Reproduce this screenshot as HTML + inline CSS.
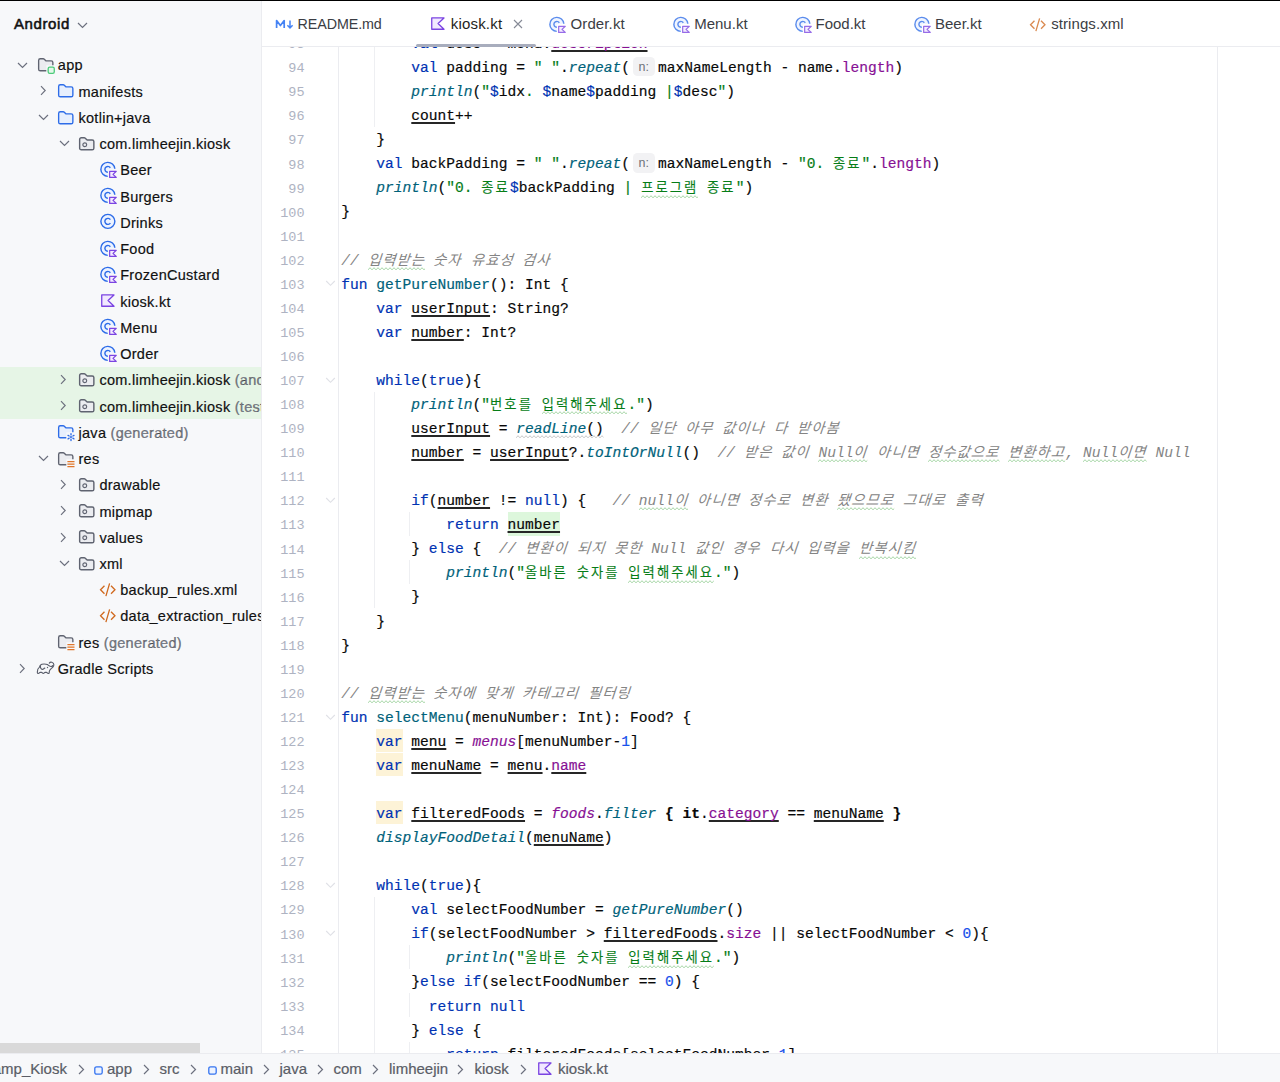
<!DOCTYPE html>
<html lang="ko">
<head>
<meta charset="utf-8">
<title>kiosk.kt</title>
<style>
*{box-sizing:border-box;margin:0;padding:0}
html,body{width:1280px;height:1082px;overflow:hidden;background:#fff}
body{position:relative;font-family:"Liberation Sans","Noto Sans CJK KR",sans-serif;color:#1e1f22}
#topline{position:absolute;left:0;top:0;width:1280px;height:1px;background:#000;z-index:20}
/* sidebar */
#side{position:absolute;left:0;top:0;width:262px;height:1053px;background:#f7f8fa;overflow:hidden;border-right:1px solid #ebecf0}
#side h1{position:absolute;left:14px;top:15px;font-size:15px;font-weight:normal;line-height:18px;color:#111;letter-spacing:0.6px;-webkit-text-stroke:0.55px #111}
.row{position:absolute;left:0;width:400px;height:26.2px;line-height:26.2px;font-size:14.5px;letter-spacing:0.28px;white-space:nowrap;color:#111}
.row .t{position:absolute;top:0;-webkit-text-stroke:0.18px #111}
.row svg{position:absolute}
.row .g{color:#7a7e89}
#hlbg{position:absolute;left:0;top:366.7px;width:262px;height:52.1px;background:#e6f5e6}
#hscroll{position:absolute;left:0;top:1043px;width:200px;height:10px;background:#d9d9d9}
/* tabs */
#tabs{position:absolute;left:262px;top:0;width:1018px;height:47px;background:#fff;border-bottom:1px solid #ebecf0}
.tab{position:absolute;top:15px;font-size:15px;line-height:18px;color:#3b3d44;white-space:nowrap}
.tab.act{color:#1e1f22}
#tabul{position:absolute;left:153.5px;top:43.5px;width:120px;height:3.5px;border-radius:2px;background:#a8adbd}
/* editor */
#ed{position:absolute;left:262px;top:47px;width:1018px;height:1006px;background:#fff;overflow:hidden}

#ln{position:absolute;left:0;top:-13.8px;width:42.5px;text-align:right;font-family:"Liberation Mono",monospace;font-size:13.5px;color:#aeb3c2}
#ln div{height:24.07px;line-height:24.07px}
#code{position:absolute;left:79.3px;top:-15px;font-family:"Liberation Mono","Noto Sans CJK KR",monospace;font-size:14.58px;color:#080808;-webkit-text-stroke:0.18px}
.cl{height:24.07px;line-height:24.07px;white-space:pre}
#gline{position:absolute;left:76px;top:0;width:1px;height:1006px;background:#ebecf0}
.ig{position:absolute;width:1px;background:#eeeff2}
#rline{position:absolute;left:955px;top:0;width:1px;height:1006px;background:#ebecf0}
.k{color:#0033b3}.s{color:#067d17}.c{color:#848484;font-style:italic;-webkit-text-stroke:0}
.c .h{font-size:14.3px;letter-spacing:1.14px;-webkit-text-stroke:0;display:inline-block;transform:skewX(-5deg)}
.f{color:#00627a;font-style:italic}.d{color:#00627a}.p{color:#871094}.n{color:#1750eb}
.i{font-style:italic}
.u{text-decoration:underline;text-decoration-thickness:1.8px;text-underline-offset:2px;text-decoration-color:#262626;text-decoration-skip-ink:none}
.w,.wg{position:relative}
.zz{position:absolute;left:0;top:14.3px;width:100%;height:4px;overflow:hidden}
.hint{display:inline-block;font-family:"Liberation Sans",sans-serif;font-size:12.5px;font-style:normal;-webkit-text-stroke:0;color:#6f7178;background:#f2f2f4;border-radius:4.5px;height:19.5px;line-height:21.3px;padding:0 6px;margin:0 3px 0 2.5px;vertical-align:1.2px}
.h{font-size:13.3px;letter-spacing:2.06px;-webkit-text-stroke:0.1px}
.idh{background:#ddf7dc;padding:5.2px 0 2.4px 0}
.wv{background:#fdf3d7;padding:5.2px 0 2.4px 0}
/* breadcrumbs */
#bc{position:absolute;left:0;top:1053px;width:1280px;height:29px;background:#f7f8fa;border-top:1px solid #ebecf0;font-size:15px;color:#5a5d66}
#bc .b{position:absolute;top:6px;-webkit-text-stroke:0.2px;line-height:18px;white-space:nowrap}
</style>
</head>
<body>
<svg width="0" height="0" style="position:absolute"><defs><pattern id="zg" patternUnits="userSpaceOnUse" width="4" height="4"><path d="M0 2.9L2 0.7L4 2.9" fill="none" stroke="#8fcb8f" stroke-width="0.8"/></pattern><pattern id="zy" patternUnits="userSpaceOnUse" width="4" height="4"><path d="M0 2.9L2 0.7L4 2.9" fill="none" stroke="#b9b9b9" stroke-width="0.8"/></pattern></defs></svg>
<div id="topline"></div>
<div id="side">
<h1>Android</h1>
<svg width="11" height="7" viewBox="0 0 11 7" fill="none" style="position:absolute;left:77px;top:21.5px"><path d="M1 1L5.5 5.5L10 1" stroke="#6c707e" stroke-width="1.2"/></svg>
<div id="hlbg"></div>
<div class="row" style="top:52.4px"><svg width="11" height="7" viewBox="0 0 11 7" fill="none" style="left:17.0px;top:9.2px"><path d="M1 1L5.5 5.5L10 1" stroke="#6c707e" stroke-width="1.2"/></svg><svg width="17.5" height="17.5" viewBox="0 0 16 16" fill="none" overflow="visible" style="left:36.6px;top:3.7px"><path d="M14.5 8.5V6C14.5 5.17 13.83 4.5 13 4.5H8.41C8.28 4.5 8.15 4.45 8.06 4.35L6.65 2.94C6.37 2.66 5.98 2.5 5.59 2.5H3C2.17 2.5 1.5 3.17 1.5 4V12C1.5 12.83 2.17 13.5 3 13.5H8.5V8.5Z" fill="#ebecf0"/><path d="M8.5 13.5H3C2.17 13.5 1.5 12.83 1.5 12V4C1.5 3.17 2.17 2.5 3 2.5H5.59C5.98 2.5 6.37 2.66 6.65 2.94L8.06 4.35C8.15 4.45 8.28 4.5 8.41 4.5H13C13.83 4.5 14.5 5.17 14.5 6V8.5" stroke="#5f6370" stroke-width="1.25"/><rect x="10.2" y="10.2" width="5.6" height="5.6" rx="1.4" fill="#e3f7e9" stroke="#4dcb7b" stroke-width="1.2"/></svg><span class="t" style="left:57.8px">app</span></div>
<div class="row" style="top:78.6px"><svg width="7" height="11" viewBox="0 0 7 11" fill="none" style="left:39.5px;top:6.9px"><path d="M1 1.2L5.2 5.5L1 9.8" stroke="#6c707e" stroke-width="1.15"/></svg><svg width="17.5" height="17.5" viewBox="0 0 16 16" fill="none" overflow="visible" style="left:57.3px;top:3.7px"><path d="M1.5 4C1.5 3.17 2.17 2.5 3 2.5H5.59C5.98 2.5 6.37 2.66 6.65 2.94L8.06 4.35C8.15 4.45 8.28 4.5 8.41 4.5H13C13.83 4.5 14.5 5.17 14.5 6V12C14.5 12.83 13.83 13.5 13 13.5H3C2.17 13.5 1.5 12.83 1.5 12Z" fill="#e7effd" stroke="#2d6ce8" stroke-width="1.25"/></svg><span class="t" style="left:78.5px">manifests</span></div>
<div class="row" style="top:104.9px"><svg width="11" height="7" viewBox="0 0 11 7" fill="none" style="left:37.7px;top:9.2px"><path d="M1 1L5.5 5.5L10 1" stroke="#6c707e" stroke-width="1.2"/></svg><svg width="17.5" height="17.5" viewBox="0 0 16 16" fill="none" overflow="visible" style="left:57.3px;top:3.7px"><path d="M1.5 4C1.5 3.17 2.17 2.5 3 2.5H5.59C5.98 2.5 6.37 2.66 6.65 2.94L8.06 4.35C8.15 4.45 8.28 4.5 8.41 4.5H13C13.83 4.5 14.5 5.17 14.5 6V12C14.5 12.83 13.83 13.5 13 13.5H3C2.17 13.5 1.5 12.83 1.5 12Z" fill="#e7effd" stroke="#2d6ce8" stroke-width="1.25"/></svg><span class="t" style="left:78.5px">kotlin+java</span></div>
<div class="row" style="top:131.1px"><svg width="11" height="7" viewBox="0 0 11 7" fill="none" style="left:58.6px;top:9.2px"><path d="M1 1L5.5 5.5L10 1" stroke="#6c707e" stroke-width="1.2"/></svg><svg width="17.5" height="17.5" viewBox="0 0 16 16" fill="none" overflow="visible" style="left:78.2px;top:3.7px"><path d="M1.5 4C1.5 3.17 2.17 2.5 3 2.5H5.59C5.98 2.5 6.37 2.66 6.65 2.94L8.06 4.35C8.15 4.45 8.28 4.5 8.41 4.5H13C13.83 4.5 14.5 5.17 14.5 6V12C14.5 12.83 13.83 13.5 13 13.5H3C2.17 13.5 1.5 12.83 1.5 12Z" fill="#ebecf0" stroke="#5f6370" stroke-width="1.3"/><circle cx="6.2" cy="8.9" r="1.75" stroke="#5f6370" stroke-width="1.05"/></svg><span class="t" style="left:99.4px">com.limheejin.kiosk</span></div>
<div class="row" style="top:157.4px"><svg width="17.5" height="17.5" viewBox="0 0 16 16" fill="none" overflow="visible" style="left:99.0px;top:3.7px"><path d="M14.48 7.1A6.4 6.4 0 1 0 8 14.05L8.1 7.65Z" fill="#edf3ff"/><path d="M14.48 7.1A6.4 6.4 0 1 0 8 14.05" stroke="#2d6ce8" stroke-width="1.3"/><path d="M10.36 6.18A2.7 2.7 0 1 0 8.1 10.35" stroke="#2d6ce8" stroke-width="1.3"/><path d="M9.75 9.4H15.8L12.8 12.2L15.8 15H9.75Z" fill="#f3eaff" stroke="#7b44e2" stroke-width="1.1" stroke-linejoin="round"/></svg><span class="t" style="left:120.2px">Beer</span></div>
<div class="row" style="top:183.6px"><svg width="17.5" height="17.5" viewBox="0 0 16 16" fill="none" overflow="visible" style="left:99.0px;top:3.7px"><path d="M14.48 7.1A6.4 6.4 0 1 0 8 14.05L8.1 7.65Z" fill="#edf3ff"/><path d="M14.48 7.1A6.4 6.4 0 1 0 8 14.05" stroke="#2d6ce8" stroke-width="1.3"/><path d="M10.36 6.18A2.7 2.7 0 1 0 8.1 10.35" stroke="#2d6ce8" stroke-width="1.3"/><path d="M9.75 9.4H15.8L12.8 12.2L15.8 15H9.75Z" fill="#f3eaff" stroke="#7b44e2" stroke-width="1.1" stroke-linejoin="round"/></svg><span class="t" style="left:120.2px">Burgers</span></div>
<div class="row" style="top:209.8px"><svg width="17.5" height="17.5" viewBox="0 0 16 16" fill="none" overflow="visible" style="left:99.0px;top:3.7px"><circle cx="8.1" cy="7.65" r="6.4" fill="#edf3ff" stroke="#2d6ce8" stroke-width="1.3"/><path d="M10.4 6.1A2.75 2.75 0 1 0 10.4 9.2" stroke="#2d6ce8" stroke-width="1.3"/></svg><span class="t" style="left:120.2px">Drinks</span></div>
<div class="row" style="top:236.1px"><svg width="17.5" height="17.5" viewBox="0 0 16 16" fill="none" overflow="visible" style="left:99.0px;top:3.7px"><path d="M14.48 7.1A6.4 6.4 0 1 0 8 14.05L8.1 7.65Z" fill="#edf3ff"/><path d="M14.48 7.1A6.4 6.4 0 1 0 8 14.05" stroke="#2d6ce8" stroke-width="1.3"/><path d="M10.36 6.18A2.7 2.7 0 1 0 8.1 10.35" stroke="#2d6ce8" stroke-width="1.3"/><path d="M9.75 9.4H15.8L12.8 12.2L15.8 15H9.75Z" fill="#f3eaff" stroke="#7b44e2" stroke-width="1.1" stroke-linejoin="round"/></svg><span class="t" style="left:120.2px">Food</span></div>
<div class="row" style="top:262.3px"><svg width="17.5" height="17.5" viewBox="0 0 16 16" fill="none" overflow="visible" style="left:99.0px;top:3.7px"><path d="M14.48 7.1A6.4 6.4 0 1 0 8 14.05L8.1 7.65Z" fill="#edf3ff"/><path d="M14.48 7.1A6.4 6.4 0 1 0 8 14.05" stroke="#2d6ce8" stroke-width="1.3"/><path d="M10.36 6.18A2.7 2.7 0 1 0 8.1 10.35" stroke="#2d6ce8" stroke-width="1.3"/><path d="M9.75 9.4H15.8L12.8 12.2L15.8 15H9.75Z" fill="#f3eaff" stroke="#7b44e2" stroke-width="1.1" stroke-linejoin="round"/></svg><span class="t" style="left:120.2px">FrozenCustard</span></div>
<div class="row" style="top:288.6px"><svg width="17.5" height="17.5" viewBox="0 0 16 16" fill="none" overflow="visible" style="left:99.0px;top:3.7px"><path d="M2.5 2.7H13.7L8.3 7.85L13.7 13H2.5Z" fill="#f1e8ff" stroke="#7b44e2" stroke-width="1.2" stroke-linejoin="round"/></svg><span class="t" style="left:120.2px">kiosk.kt</span></div>
<div class="row" style="top:314.8px"><svg width="17.5" height="17.5" viewBox="0 0 16 16" fill="none" overflow="visible" style="left:99.0px;top:3.7px"><path d="M14.48 7.1A6.4 6.4 0 1 0 8 14.05L8.1 7.65Z" fill="#edf3ff"/><path d="M14.48 7.1A6.4 6.4 0 1 0 8 14.05" stroke="#2d6ce8" stroke-width="1.3"/><path d="M10.36 6.18A2.7 2.7 0 1 0 8.1 10.35" stroke="#2d6ce8" stroke-width="1.3"/><path d="M9.75 9.4H15.8L12.8 12.2L15.8 15H9.75Z" fill="#f3eaff" stroke="#7b44e2" stroke-width="1.1" stroke-linejoin="round"/></svg><span class="t" style="left:120.2px">Menu</span></div>
<div class="row" style="top:341.0px"><svg width="17.5" height="17.5" viewBox="0 0 16 16" fill="none" overflow="visible" style="left:99.0px;top:3.7px"><path d="M14.48 7.1A6.4 6.4 0 1 0 8 14.05L8.1 7.65Z" fill="#edf3ff"/><path d="M14.48 7.1A6.4 6.4 0 1 0 8 14.05" stroke="#2d6ce8" stroke-width="1.3"/><path d="M10.36 6.18A2.7 2.7 0 1 0 8.1 10.35" stroke="#2d6ce8" stroke-width="1.3"/><path d="M9.75 9.4H15.8L12.8 12.2L15.8 15H9.75Z" fill="#f3eaff" stroke="#7b44e2" stroke-width="1.1" stroke-linejoin="round"/></svg><span class="t" style="left:120.2px">Order</span></div>
<div class="row" style="top:367.3px"><svg width="7" height="11" viewBox="0 0 7 11" fill="none" style="left:60.4px;top:6.9px"><path d="M1 1.2L5.2 5.5L1 9.8" stroke="#6c707e" stroke-width="1.15"/></svg><svg width="17.5" height="17.5" viewBox="0 0 16 16" fill="none" overflow="visible" style="left:78.2px;top:3.7px"><path d="M1.5 4C1.5 3.17 2.17 2.5 3 2.5H5.59C5.98 2.5 6.37 2.66 6.65 2.94L8.06 4.35C8.15 4.45 8.28 4.5 8.41 4.5H13C13.83 4.5 14.5 5.17 14.5 6V12C14.5 12.83 13.83 13.5 13 13.5H3C2.17 13.5 1.5 12.83 1.5 12Z" fill="#ebecf0" stroke="#5f6370" stroke-width="1.3"/><circle cx="6.2" cy="8.9" r="1.75" stroke="#5f6370" stroke-width="1.05"/></svg><span class="t" style="left:99.4px">com.limheejin.kiosk<span class="g"> (androidTest)</span></span></div>
<div class="row" style="top:393.5px"><svg width="7" height="11" viewBox="0 0 7 11" fill="none" style="left:60.4px;top:6.9px"><path d="M1 1.2L5.2 5.5L1 9.8" stroke="#6c707e" stroke-width="1.15"/></svg><svg width="17.5" height="17.5" viewBox="0 0 16 16" fill="none" overflow="visible" style="left:78.2px;top:3.7px"><path d="M1.5 4C1.5 3.17 2.17 2.5 3 2.5H5.59C5.98 2.5 6.37 2.66 6.65 2.94L8.06 4.35C8.15 4.45 8.28 4.5 8.41 4.5H13C13.83 4.5 14.5 5.17 14.5 6V12C14.5 12.83 13.83 13.5 13 13.5H3C2.17 13.5 1.5 12.83 1.5 12Z" fill="#ebecf0" stroke="#5f6370" stroke-width="1.3"/><circle cx="6.2" cy="8.9" r="1.75" stroke="#5f6370" stroke-width="1.05"/></svg><span class="t" style="left:99.4px">com.limheejin.kiosk<span class="g"> (test)</span></span></div>
<div class="row" style="top:419.8px"><svg width="17.5" height="17.5" viewBox="0 0 16 16" fill="none" overflow="visible" style="left:57.3px;top:3.7px"><path d="M14.5 8.5V6C14.5 5.17 13.83 4.5 13 4.5H8.41C8.28 4.5 8.15 4.45 8.06 4.35L6.65 2.94C6.37 2.66 5.98 2.5 5.59 2.5H3C2.17 2.5 1.5 3.17 1.5 4V12C1.5 12.83 2.17 13.5 3 13.5H8.5V8.5Z" fill="#e7effd"/><path d="M8.5 13.5H3C2.17 13.5 1.5 12.83 1.5 12V4C1.5 3.17 2.17 2.5 3 2.5H5.59C5.98 2.5 6.37 2.66 6.65 2.94L8.06 4.35C8.15 4.45 8.28 4.5 8.41 4.5H13C13.83 4.5 14.5 5.17 14.5 6V8.5" stroke="#2d6ce8" stroke-width="1.25"/><circle cx="12.8" cy="12.9" r="0.95" fill="#2d6ce8"/><path d="M12.8 10.9V9.8M12.8 14.9V16M14.5 11.9L15.5 11.35M14.5 13.9L15.5 14.45M11.1 11.9L10.1 11.35M11.1 13.9L10.1 14.45" stroke="#2d6ce8" stroke-width="1.25" stroke-linecap="round"/></svg><span class="t" style="left:78.5px">java<span class="g"> (generated)</span></span></div>
<div class="row" style="top:446.0px"><svg width="11" height="7" viewBox="0 0 11 7" fill="none" style="left:37.7px;top:9.2px"><path d="M1 1L5.5 5.5L10 1" stroke="#6c707e" stroke-width="1.2"/></svg><svg width="17.5" height="17.5" viewBox="0 0 16 16" fill="none" overflow="visible" style="left:57.3px;top:3.7px"><path d="M14.5 8.5V6C14.5 5.17 13.83 4.5 13 4.5H8.41C8.28 4.5 8.15 4.45 8.06 4.35L6.65 2.94C6.37 2.66 5.98 2.5 5.59 2.5H3C2.17 2.5 1.5 3.17 1.5 4V12C1.5 12.83 2.17 13.5 3 13.5H8.5V8.5Z" fill="#ebecf0"/><path d="M8.5 13.5H3C2.17 13.5 1.5 12.83 1.5 12V4C1.5 3.17 2.17 2.5 3 2.5H5.59C5.98 2.5 6.37 2.66 6.65 2.94L8.06 4.35C8.15 4.45 8.28 4.5 8.41 4.5H13C13.83 4.5 14.5 5.17 14.5 6V8.5" stroke="#5f6370" stroke-width="1.25"/><path d="M9.5 10.6H16M9.5 12.9H16M9.5 15.2H16" stroke="#e0762a" stroke-width="1.3"/></svg><span class="t" style="left:78.5px">res</span></div>
<div class="row" style="top:472.2px"><svg width="7" height="11" viewBox="0 0 7 11" fill="none" style="left:60.4px;top:6.9px"><path d="M1 1.2L5.2 5.5L1 9.8" stroke="#6c707e" stroke-width="1.15"/></svg><svg width="17.5" height="17.5" viewBox="0 0 16 16" fill="none" overflow="visible" style="left:78.2px;top:3.7px"><path d="M1.5 4C1.5 3.17 2.17 2.5 3 2.5H5.59C5.98 2.5 6.37 2.66 6.65 2.94L8.06 4.35C8.15 4.45 8.28 4.5 8.41 4.5H13C13.83 4.5 14.5 5.17 14.5 6V12C14.5 12.83 13.83 13.5 13 13.5H3C2.17 13.5 1.5 12.83 1.5 12Z" fill="#ebecf0" stroke="#5f6370" stroke-width="1.3"/><circle cx="6.2" cy="8.9" r="1.75" stroke="#5f6370" stroke-width="1.05"/></svg><span class="t" style="left:99.4px">drawable</span></div>
<div class="row" style="top:498.5px"><svg width="7" height="11" viewBox="0 0 7 11" fill="none" style="left:60.4px;top:6.9px"><path d="M1 1.2L5.2 5.5L1 9.8" stroke="#6c707e" stroke-width="1.15"/></svg><svg width="17.5" height="17.5" viewBox="0 0 16 16" fill="none" overflow="visible" style="left:78.2px;top:3.7px"><path d="M1.5 4C1.5 3.17 2.17 2.5 3 2.5H5.59C5.98 2.5 6.37 2.66 6.65 2.94L8.06 4.35C8.15 4.45 8.28 4.5 8.41 4.5H13C13.83 4.5 14.5 5.17 14.5 6V12C14.5 12.83 13.83 13.5 13 13.5H3C2.17 13.5 1.5 12.83 1.5 12Z" fill="#ebecf0" stroke="#5f6370" stroke-width="1.3"/><circle cx="6.2" cy="8.9" r="1.75" stroke="#5f6370" stroke-width="1.05"/></svg><span class="t" style="left:99.4px">mipmap</span></div>
<div class="row" style="top:524.7px"><svg width="7" height="11" viewBox="0 0 7 11" fill="none" style="left:60.4px;top:6.9px"><path d="M1 1.2L5.2 5.5L1 9.8" stroke="#6c707e" stroke-width="1.15"/></svg><svg width="17.5" height="17.5" viewBox="0 0 16 16" fill="none" overflow="visible" style="left:78.2px;top:3.7px"><path d="M1.5 4C1.5 3.17 2.17 2.5 3 2.5H5.59C5.98 2.5 6.37 2.66 6.65 2.94L8.06 4.35C8.15 4.45 8.28 4.5 8.41 4.5H13C13.83 4.5 14.5 5.17 14.5 6V12C14.5 12.83 13.83 13.5 13 13.5H3C2.17 13.5 1.5 12.83 1.5 12Z" fill="#ebecf0" stroke="#5f6370" stroke-width="1.3"/><circle cx="6.2" cy="8.9" r="1.75" stroke="#5f6370" stroke-width="1.05"/></svg><span class="t" style="left:99.4px">values</span></div>
<div class="row" style="top:551.0px"><svg width="11" height="7" viewBox="0 0 11 7" fill="none" style="left:58.6px;top:9.2px"><path d="M1 1L5.5 5.5L10 1" stroke="#6c707e" stroke-width="1.2"/></svg><svg width="17.5" height="17.5" viewBox="0 0 16 16" fill="none" overflow="visible" style="left:78.2px;top:3.7px"><path d="M1.5 4C1.5 3.17 2.17 2.5 3 2.5H5.59C5.98 2.5 6.37 2.66 6.65 2.94L8.06 4.35C8.15 4.45 8.28 4.5 8.41 4.5H13C13.83 4.5 14.5 5.17 14.5 6V12C14.5 12.83 13.83 13.5 13 13.5H3C2.17 13.5 1.5 12.83 1.5 12Z" fill="#ebecf0" stroke="#5f6370" stroke-width="1.3"/><circle cx="6.2" cy="8.9" r="1.75" stroke="#5f6370" stroke-width="1.05"/></svg><span class="t" style="left:99.4px">xml</span></div>
<div class="row" style="top:577.2px"><svg width="17.5" height="17.5" viewBox="0 0 16 16" fill="none" overflow="visible" style="left:99.0px;top:3.7px"><path d="M5 4.3L1.4 8L5 11.7M11 4.3L14.6 8L11 11.7M9.7 2.2L6.3 13.8" stroke="#d0691e" stroke-width="1.2"/></svg><span class="t" style="left:120.2px">backup_rules.xml</span></div>
<div class="row" style="top:603.4px"><svg width="17.5" height="17.5" viewBox="0 0 16 16" fill="none" overflow="visible" style="left:99.0px;top:3.7px"><path d="M5 4.3L1.4 8L5 11.7M11 4.3L14.6 8L11 11.7M9.7 2.2L6.3 13.8" stroke="#d0691e" stroke-width="1.2"/></svg><span class="t" style="left:120.2px">data_extraction_rules.xml</span></div>
<div class="row" style="top:629.7px"><svg width="17.5" height="17.5" viewBox="0 0 16 16" fill="none" overflow="visible" style="left:57.3px;top:3.7px"><path d="M14.5 8.5V6C14.5 5.17 13.83 4.5 13 4.5H8.41C8.28 4.5 8.15 4.45 8.06 4.35L6.65 2.94C6.37 2.66 5.98 2.5 5.59 2.5H3C2.17 2.5 1.5 3.17 1.5 4V12C1.5 12.83 2.17 13.5 3 13.5H8.5V8.5Z" fill="#ebecf0"/><path d="M8.5 13.5H3C2.17 13.5 1.5 12.83 1.5 12V4C1.5 3.17 2.17 2.5 3 2.5H5.59C5.98 2.5 6.37 2.66 6.65 2.94L8.06 4.35C8.15 4.45 8.28 4.5 8.41 4.5H13C13.83 4.5 14.5 5.17 14.5 6V8.5" stroke="#5f6370" stroke-width="1.25"/><path d="M9.5 10.6H16M9.5 12.9H16M9.5 15.2H16" stroke="#e0762a" stroke-width="1.3"/></svg><span class="t" style="left:78.5px">res<span class="g"> (generated)</span></span></div>
<div class="row" style="top:655.9px"><svg width="7" height="11" viewBox="0 0 7 11" fill="none" style="left:18.8px;top:6.9px"><path d="M1 1.2L5.2 5.5L1 9.8" stroke="#6c707e" stroke-width="1.15"/></svg><svg width="28" height="24" viewBox="0 0 28 24" fill="none" style="left:32px;top:0.1px"><path d="M17.3 7.1C17.9 6.2 18.9 5.9 19.8 6.2C21 6.6 21.9 7.6 21.85 8.8C21.8 9.8 21.4 10.5 20.85 11.1C20 12 18.4 13.2 17.75 14.2C17.2 15.1 17.3 16 17.15 16.8C17.05 17.3 16.7 17.5 16.2 17.5C15.3 17.5 15.2 16.4 14.4 16.4H13.1C12.3 16.4 12.2 17.5 11.3 17.5C10.4 17.5 10.3 16.4 9.5 16.4H8.2C7.4 16.4 7.3 17.5 6.4 17.5C5.6 17.5 5.3 17 5.3 16.2C5.3 14.5 5.9 12.2 7.5 11.1C7.7 10.3 7.9 9.7 8.4 9.2C9.2 8.3 10.6 8 12.2 8C13.6 8 14.5 8.2 15.3 8.6C16.1 9 16.5 9.5 17.1 9.85C18 10.4 19 10.6 19.6 10.4C20.1 10.3 20.4 10 20.5 9.6M8.4 9.6C8.3 10.8 8.6 12.2 9.3 12.9C10 13.6 11 13.5 11.6 12.8C12 12.4 12.3 12.2 12.8 12.1" stroke="#5a5e6b" stroke-width="1.15" stroke-linecap="round" stroke-linejoin="round"/><circle cx="15.5" cy="11.5" r="0.7" fill="#5a5e6b"/></svg><span class="t" style="left:57.8px">Gradle Scripts</span></div>
<div id="hscroll"></div>
</div>
<div id="tabs">
<svg width="20" height="16" viewBox="0 0 20 16" fill="none" style="position:absolute;left:12.0px;top:16.0px;opacity:1"><path d="M2.6 12V4.6L6.4 9.6L10.2 4.6V12" stroke="#4583f4" stroke-width="1.7" stroke-linejoin="round"/><path d="M16 4.4V11.6M13.4 9.2L16 11.9L18.6 9.2" stroke="#4583f4" stroke-width="1.5"/></svg><span class="tab" style="left:35.6px;font-size:14.3px;letter-spacing:-0.1px">README.md</span>
<svg width="17.5" height="17.5" viewBox="0 0 16 16" fill="none" overflow="visible" style="position:absolute;left:167.2px;top:15.3px"><path d="M2.5 2.7H13.7L8.3 7.85L13.7 13H2.5Z" fill="#f1e8ff" stroke="#7b44e2" stroke-width="1.2" stroke-linejoin="round"/></svg><span class="tab act" style="left:188.7px;letter-spacing:0.2px">kiosk.kt</span>
<svg width="10" height="10" viewBox="0 0 10 10" fill="none" style="position:absolute;left:251.3px;top:19.3px"><path d="M1 1L9 9M9 1L1 9" stroke="#868a96" stroke-width="1.1"/></svg>
<div id="tabul"></div>
<svg width="17.5" height="17.5" viewBox="0 0 16 16" fill="none" overflow="visible" style="position:absolute;left:286.2px;top:16.0px;opacity:0.78"><path d="M14.48 7.1A6.4 6.4 0 1 0 8 14.05L8.1 7.65Z" fill="#edf3ff"/><path d="M14.48 7.1A6.4 6.4 0 1 0 8 14.05" stroke="#2d6ce8" stroke-width="1.3"/><path d="M10.36 6.18A2.7 2.7 0 1 0 8.1 10.35" stroke="#2d6ce8" stroke-width="1.3"/><path d="M9.75 9.4H15.8L12.8 12.2L15.8 15H9.75Z" fill="#f3eaff" stroke="#7b44e2" stroke-width="1.1" stroke-linejoin="round"/></svg><span class="tab" style="left:308.5px;letter-spacing:0.12px">Order.kt</span>
<svg width="17.5" height="17.5" viewBox="0 0 16 16" fill="none" overflow="visible" style="position:absolute;left:410.2px;top:16.0px;opacity:0.78"><path d="M14.48 7.1A6.4 6.4 0 1 0 8 14.05L8.1 7.65Z" fill="#edf3ff"/><path d="M14.48 7.1A6.4 6.4 0 1 0 8 14.05" stroke="#2d6ce8" stroke-width="1.3"/><path d="M10.36 6.18A2.7 2.7 0 1 0 8.1 10.35" stroke="#2d6ce8" stroke-width="1.3"/><path d="M9.75 9.4H15.8L12.8 12.2L15.8 15H9.75Z" fill="#f3eaff" stroke="#7b44e2" stroke-width="1.1" stroke-linejoin="round"/></svg><span class="tab" style="left:432.2px;">Menu.kt</span>
<svg width="17.5" height="17.5" viewBox="0 0 16 16" fill="none" overflow="visible" style="position:absolute;left:532.0px;top:16.0px;opacity:0.78"><path d="M14.48 7.1A6.4 6.4 0 1 0 8 14.05L8.1 7.65Z" fill="#edf3ff"/><path d="M14.48 7.1A6.4 6.4 0 1 0 8 14.05" stroke="#2d6ce8" stroke-width="1.3"/><path d="M10.36 6.18A2.7 2.7 0 1 0 8.1 10.35" stroke="#2d6ce8" stroke-width="1.3"/><path d="M9.75 9.4H15.8L12.8 12.2L15.8 15H9.75Z" fill="#f3eaff" stroke="#7b44e2" stroke-width="1.1" stroke-linejoin="round"/></svg><span class="tab" style="left:553.5px;">Food.kt</span>
<svg width="17.5" height="17.5" viewBox="0 0 16 16" fill="none" overflow="visible" style="position:absolute;left:650.5px;top:16.0px;opacity:0.78"><path d="M14.48 7.1A6.4 6.4 0 1 0 8 14.05L8.1 7.65Z" fill="#edf3ff"/><path d="M14.48 7.1A6.4 6.4 0 1 0 8 14.05" stroke="#2d6ce8" stroke-width="1.3"/><path d="M10.36 6.18A2.7 2.7 0 1 0 8.1 10.35" stroke="#2d6ce8" stroke-width="1.3"/><path d="M9.75 9.4H15.8L12.8 12.2L15.8 15H9.75Z" fill="#f3eaff" stroke="#7b44e2" stroke-width="1.1" stroke-linejoin="round"/></svg><span class="tab" style="left:673.0px;">Beer.kt</span>
<svg width="17.5" height="17.5" viewBox="0 0 16 16" fill="none" overflow="visible" style="position:absolute;left:766.5px;top:16.0px;opacity:0.78"><path d="M5 4.3L1.4 8L5 11.7M11 4.3L14.6 8L11 11.7M9.7 2.2L6.3 13.8" stroke="#d0691e" stroke-width="1.2"/></svg><span class="tab" style="left:789.2px;letter-spacing:0.08px">strings.xml</span>
</div>
<div id="ed">
<div id="gline"></div><div id="rline"></div>
<div class="ig" style="left:112.0px;top:0.0px;height:79.9px"></div>
<div class="ig" style="left:112.0px;top:344.7px;height:216.6px"></div>
<div class="ig" style="left:147.0px;top:465.0px;height:24.1px"></div>
<div class="ig" style="left:147.0px;top:513.1px;height:24.1px"></div>
<div class="ig" style="left:112.0px;top:850.1px;height:155.9px"></div>
<div class="ig" style="left:147.0px;top:898.3px;height:24.1px"></div>
<div class="ig" style="left:147.0px;top:946.4px;height:24.1px"></div>
<div class="ig" style="left:147.0px;top:994.5px;height:11.5px"></div>
<svg width="11" height="7" viewBox="0 0 11 7" fill="none" style="position:absolute;left:63.0px;top:233.4px"><path d="M1.2 1L5.5 5.3L9.8 1" stroke="#dfe0e6" stroke-width="1.1"/></svg>
<svg width="11" height="7" viewBox="0 0 11 7" fill="none" style="position:absolute;left:63.0px;top:329.7px"><path d="M1.2 1L5.5 5.3L9.8 1" stroke="#dfe0e6" stroke-width="1.1"/></svg>
<svg width="11" height="7" viewBox="0 0 11 7" fill="none" style="position:absolute;left:63.0px;top:450.1px"><path d="M1.2 1L5.5 5.3L9.8 1" stroke="#dfe0e6" stroke-width="1.1"/></svg>
<svg width="11" height="7" viewBox="0 0 11 7" fill="none" style="position:absolute;left:63.0px;top:666.7px"><path d="M1.2 1L5.5 5.3L9.8 1" stroke="#dfe0e6" stroke-width="1.1"/></svg>
<svg width="11" height="7" viewBox="0 0 11 7" fill="none" style="position:absolute;left:63.0px;top:835.2px"><path d="M1.2 1L5.5 5.3L9.8 1" stroke="#dfe0e6" stroke-width="1.1"/></svg>
<svg width="11" height="7" viewBox="0 0 11 7" fill="none" style="position:absolute;left:63.0px;top:883.3px"><path d="M1.2 1L5.5 5.3L9.8 1" stroke="#dfe0e6" stroke-width="1.1"/></svg>
<div id="ln">
<div>93</div>
<div>94</div>
<div>95</div>
<div>96</div>
<div>97</div>
<div>98</div>
<div>99</div>
<div>100</div>
<div>101</div>
<div>102</div>
<div>103</div>
<div>104</div>
<div>105</div>
<div>106</div>
<div>107</div>
<div>108</div>
<div>109</div>
<div>110</div>
<div>111</div>
<div>112</div>
<div>113</div>
<div>114</div>
<div>115</div>
<div>116</div>
<div>117</div>
<div>118</div>
<div>119</div>
<div>120</div>
<div>121</div>
<div>122</div>
<div>123</div>
<div>124</div>
<div>125</div>
<div>126</div>
<div>127</div>
<div>128</div>
<div>129</div>
<div>130</div>
<div>131</div>
<div>132</div>
<div>133</div>
<div>134</div>
<div>135</div>
</div>
<div id="code">
<div class="cl">        <span class="k">val</span> desc = menu.<span class="p u">description</span></div>
<div class="cl">        <span class="k">val</span> padding = <span class="s">" "</span>.<span class="f">repeat</span>(<span class="hint">n:</span>maxNameLength - name.<span class="p">length</span>)</div>
<div class="cl">        <span class="f">println</span>(<span class="s">"</span><span class="k">$</span>idx<span class="s">. </span><span class="k">$</span>name<span class="k">$</span>padding<span class="s"> |</span><span class="k">$</span>desc<span class="s">"</span>)</div>
<div class="cl">        <span class="u">count</span>++</div>
<div class="cl">    }</div>
<div class="cl">    <span class="k">val</span> backPadding = <span class="s">" "</span>.<span class="f">repeat</span>(<span class="hint">n:</span>maxNameLength - <span class="s">"0. <span class="h">종료</span>"</span>.<span class="p">length</span>)</div>
<div class="cl">    <span class="f">println</span>(<span class="s">"0. <span class="h">종료</span></span><span class="k">$</span>backPadding<span class="s"> | <span class="w"><svg class="zz"><rect width="100%" height="4" fill="url(#zg)"/></svg><span class="h">프로그램</span></span> <span class="h">종료</span>"</span>)</div>
<div class="cl">}</div>
<div class="cl">&nbsp;</div>
<div class="cl"><span class="c">// <span class="w"><svg class="zz"><rect width="100%" height="4" fill="url(#zg)"/></svg><span class="h">입력받는</span></span> <span class="h">숫자</span> <span class="h">유효성</span> <span class="h">검사</span></span></div>
<div class="cl"><span class="k">fun</span> <span class="d">getPureNumber</span>(): Int {</div>
<div class="cl">    <span class="k">var</span> <span class="u">userInput</span>: String?</div>
<div class="cl">    <span class="k">var</span> <span class="u">number</span>: Int?</div>
<div class="cl">&nbsp;</div>
<div class="cl">    <span class="k">while</span>(<span class="k">true</span>){</div>
<div class="cl">        <span class="f">println</span>(<span class="s">"<span class="h">번호를</span> <span class="w"><svg class="zz"><rect width="100%" height="4" fill="url(#zg)"/></svg><span class="h">입력해주세요</span></span>."</span>)</div>
<div class="cl">        <span class="u">userInput</span> = <span class="wg"><svg class="zz"><rect width="100%" height="4" fill="url(#zy)"/></svg><span class="f">readLine</span>()</span>  <span class="c">// <span class="h">일단</span> <span class="h">아무</span> <span class="h">값이나</span> <span class="h">다</span> <span class="h">받아봄</span></span></div>
<div class="cl">        <span class="u">number</span> = <span class="u">userInput</span>?.<span class="f">toIntOrNull</span>()  <span class="c">// <span class="h">받은</span> <span class="h">값이</span> <span class="w"><svg class="zz"><rect width="100%" height="4" fill="url(#zg)"/></svg>Null<span class="h">이</span></span> <span class="h">아니면</span> <span class="w"><svg class="zz"><rect width="100%" height="4" fill="url(#zg)"/></svg><span class="h">정수값으로</span></span> <span class="w"><svg class="zz"><rect width="100%" height="4" fill="url(#zg)"/></svg><span class="h">변환하고</span></span>, <span class="w"><svg class="zz"><rect width="100%" height="4" fill="url(#zg)"/></svg>Null<span class="h">이면</span></span> Null</span></div>
<div class="cl">&nbsp;</div>
<div class="cl">        <span class="k">if</span>(<span class="u">number</span> != <span class="k">null</span>) {   <span class="c">// <span class="w"><svg class="zz"><rect width="100%" height="4" fill="url(#zg)"/></svg>null<span class="h">이</span></span> <span class="h">아니면</span> <span class="h">정수로</span> <span class="h">변환</span> <span class="w"><svg class="zz"><rect width="100%" height="4" fill="url(#zg)"/></svg><span class="h">됐으므로</span></span> <span class="h">그대로</span> <span class="h">출력</span></span></div>
<div class="cl">            <span class="k">return</span> <span class="u idh">number</span></div>
<div class="cl">        } <span class="k">else</span> {  <span class="c">// <span class="h">변환이</span> <span class="h">되지</span> <span class="h">못한</span> Null <span class="h">값인</span> <span class="h">경우</span> <span class="h">다시</span> <span class="h">입력을</span> <span class="w"><svg class="zz"><rect width="100%" height="4" fill="url(#zg)"/></svg><span class="h">반복시킴</span></span></span></div>
<div class="cl">            <span class="f">println</span>(<span class="s">"<span class="h">올바른</span> <span class="h">숫자를</span> <span class="w"><svg class="zz"><rect width="100%" height="4" fill="url(#zg)"/></svg><span class="h">입력해주세요</span></span>."</span>)</div>
<div class="cl">        }</div>
<div class="cl">    }</div>
<div class="cl">}</div>
<div class="cl">&nbsp;</div>
<div class="cl"><span class="c">// <span class="w"><svg class="zz"><rect width="100%" height="4" fill="url(#zg)"/></svg><span class="h">입력받는</span></span> <span class="h">숫자에</span> <span class="h">맞게</span> <span class="h">카테고리</span> <span class="h">필터링</span></span></div>
<div class="cl"><span class="k">fun</span> <span class="d">selectMenu</span>(menuNumber: Int): Food? {</div>
<div class="cl">    <span class="k wv">var</span> <span class="u">menu</span> = <span class="p i">menus</span>[menuNumber-<span class="n">1</span>]</div>
<div class="cl">    <span class="k wv">var</span> <span class="u">menuName</span> = <span class="u">menu</span>.<span class="p u">name</span></div>
<div class="cl">&nbsp;</div>
<div class="cl">    <span class="k wv">var</span> <span class="u">filteredFoods</span> = <span class="p i">foods</span>.<span class="f">filter</span> <b>{ it</b>.<span class="p u">category</span> == <span class="u">menuName</span> <b>}</b></div>
<div class="cl">    <span class="f">displayFoodDetail</span>(<span class="u">menuName</span>)</div>
<div class="cl">&nbsp;</div>
<div class="cl">    <span class="k">while</span>(<span class="k">true</span>){</div>
<div class="cl">        <span class="k">val</span> selectFoodNumber = <span class="f">getPureNumber</span>()</div>
<div class="cl">        <span class="k">if</span>(selectFoodNumber &gt; <span class="u">filteredFoods</span>.<span class="p">size</span> || selectFoodNumber &lt; <span class="n">0</span>){</div>
<div class="cl">            <span class="f">println</span>(<span class="s">"<span class="h">올바른</span> <span class="h">숫자를</span> <span class="w"><svg class="zz"><rect width="100%" height="4" fill="url(#zg)"/></svg><span class="h">입력해주세요</span></span>."</span>)</div>
<div class="cl">        }<span class="k">else</span> <span class="k">if</span>(selectFoodNumber == <span class="n">0</span>) {</div>
<div class="cl">          <span class="k">return</span> <span class="k">null</span></div>
<div class="cl">        } <span class="k">else</span> {</div>
<div class="cl">            <span class="k">return</span> <span class="u">filteredFoods</span>[selectFoodNumber-<span class="n">1</span>]</div>
</div>
</div>
<div id="bc">
<span class="b" style="left:-7.3px">amp_Kiosk</span>
<svg width="7" height="11" viewBox="0 0 7 11" fill="none" style="position:absolute;left:77.5px;top:10px"><path d="M1 1L5.5 5.5L1 10" stroke="#6c707e" stroke-width="1.2"/></svg>
<svg width="9" height="9" viewBox="0 0 9 9" fill="none" style="position:absolute;left:94.0px;top:11.5px"><rect x="0.8" y="0.8" width="7.4" height="7.4" rx="1.8" fill="#edf3ff" stroke="#3574f0" stroke-width="1.3"/></svg>
<span class="b" style="left:107.0px">app</span>
<svg width="7" height="11" viewBox="0 0 7 11" fill="none" style="position:absolute;left:142.5px;top:10px"><path d="M1 1L5.5 5.5L1 10" stroke="#6c707e" stroke-width="1.2"/></svg>
<span class="b" style="left:159.5px">src</span>
<svg width="7" height="11" viewBox="0 0 7 11" fill="none" style="position:absolute;left:190.0px;top:10px"><path d="M1 1L5.5 5.5L1 10" stroke="#6c707e" stroke-width="1.2"/></svg>
<svg width="9" height="9" viewBox="0 0 9 9" fill="none" style="position:absolute;left:207.5px;top:11.5px"><rect x="0.8" y="0.8" width="7.4" height="7.4" rx="1.8" fill="#edf3ff" stroke="#3574f0" stroke-width="1.3"/></svg>
<span class="b" style="left:220.5px">main</span>
<svg width="7" height="11" viewBox="0 0 7 11" fill="none" style="position:absolute;left:262.5px;top:10px"><path d="M1 1L5.5 5.5L1 10" stroke="#6c707e" stroke-width="1.2"/></svg>
<span class="b" style="left:279.5px">java</span>
<svg width="7" height="11" viewBox="0 0 7 11" fill="none" style="position:absolute;left:316.5px;top:10px"><path d="M1 1L5.5 5.5L1 10" stroke="#6c707e" stroke-width="1.2"/></svg>
<span class="b" style="left:333.5px">com</span>
<svg width="7" height="11" viewBox="0 0 7 11" fill="none" style="position:absolute;left:372.0px;top:10px"><path d="M1 1L5.5 5.5L1 10" stroke="#6c707e" stroke-width="1.2"/></svg>
<span class="b" style="left:389.0px">limheejin</span>
<svg width="7" height="11" viewBox="0 0 7 11" fill="none" style="position:absolute;left:457.0px;top:10px"><path d="M1 1L5.5 5.5L1 10" stroke="#6c707e" stroke-width="1.2"/></svg>
<span class="b" style="left:474.5px">kiosk</span>
<svg width="7" height="11" viewBox="0 0 7 11" fill="none" style="position:absolute;left:520.0px;top:10px"><path d="M1 1L5.5 5.5L1 10" stroke="#6c707e" stroke-width="1.2"/></svg>
<svg width="17.5" height="17.5" viewBox="0 0 16 16" fill="none" overflow="visible" style="position:absolute;left:535.6px;top:6.2px"><path d="M2.5 2.7H13.7L8.3 7.85L13.7 13H2.5Z" fill="#f1e8ff" stroke="#7b44e2" stroke-width="1.2" stroke-linejoin="round"/></svg>
<span class="b" style="left:558.0px">kiosk.kt</span>
</div>
</body>
</html>
